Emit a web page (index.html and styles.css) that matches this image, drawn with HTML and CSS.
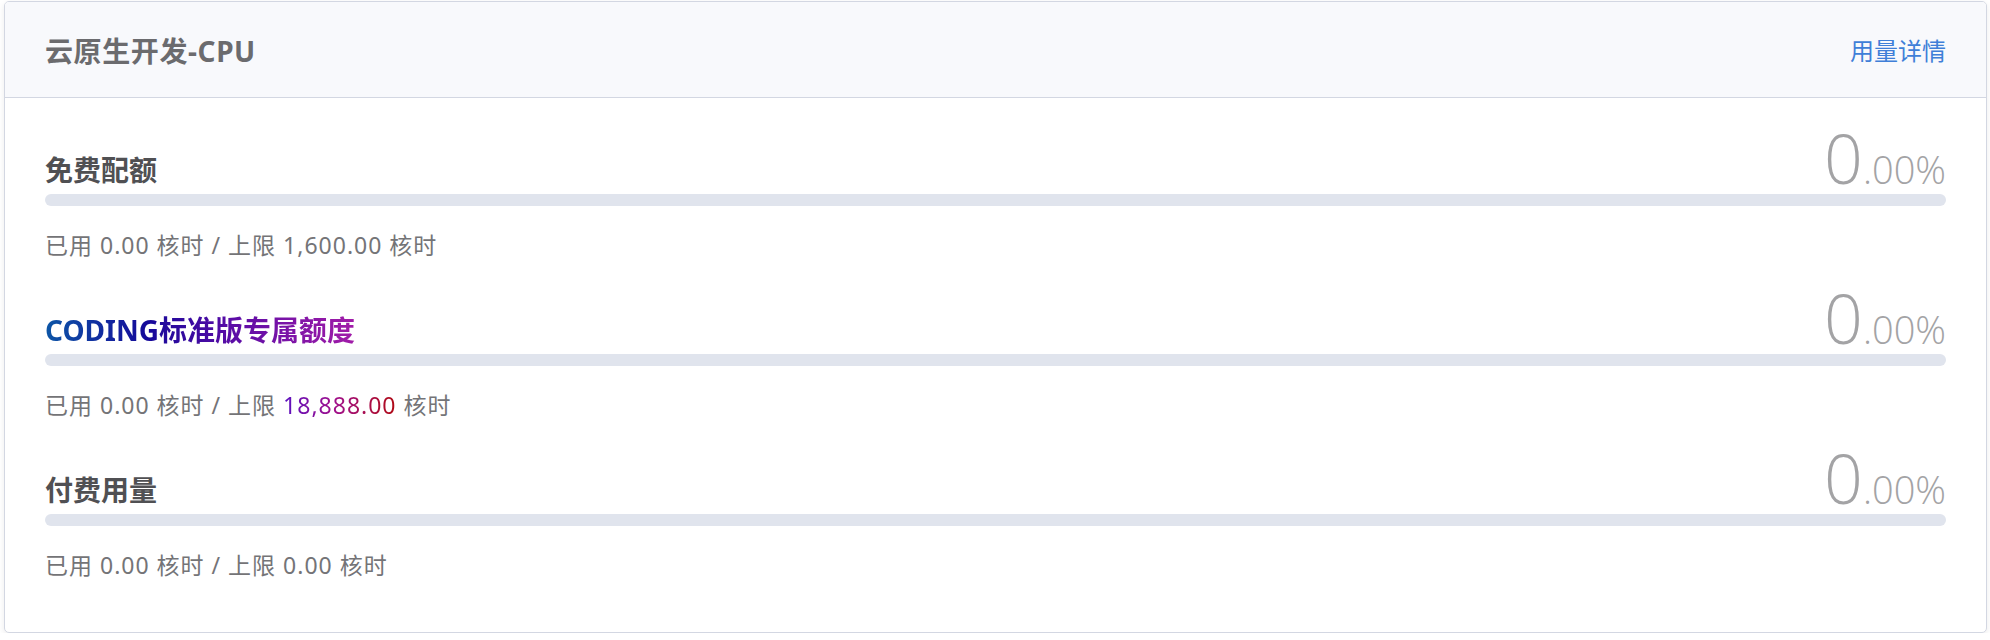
FILE: index.html
```html
<!DOCTYPE html>
<html lang="zh-CN">
<head>
<meta charset="utf-8">
<title>云原生开发-CPU</title>
<link rel="stylesheet" href="styles.css">
</head>
<body>
<div class="page">
  <div class="card">
    <div class="card-header">
      <div class="card-title">云原生开发-CPU</div>
      <a class="detail-link" href="#">用量详情</a>
    </div>
    <div class="card-body">
      <div class="section">
        <div class="row">
          <div class="label">免费配额</div>
          <div class="percent"><span class="int">0</span><span class="dec">.00%</span></div>
        </div>
        <div class="bar"><div class="bar-fill" style="width:0%"></div></div>
        <div class="usage">已用 0.00 核时 / 上限 1,600.00 核时</div>
      </div>
      <div class="section">
        <div class="row">
          <div class="label label-gradient">CODING标准版专属额度</div>
          <div class="percent"><span class="int">0</span><span class="dec">.00%</span></div>
        </div>
        <div class="bar"><div class="bar-fill" style="width:0%"></div></div>
        <div class="usage">已用 0.00 核时 / 上限 <span class="num-gradient">18,888.00</span> 核时</div>
      </div>
      <div class="section">
        <div class="row">
          <div class="label">付费用量</div>
          <div class="percent"><span class="int">0</span><span class="dec">.00%</span></div>
        </div>
        <div class="bar"><div class="bar-fill" style="width:0%"></div></div>
        <div class="usage">已用 0.00 核时 / 上限 0.00 核时</div>
      </div>
    </div>
  </div>
</div>
</body>
</html>
```

FILE: styles.css
```css
html, body {
  margin: 0;
  padding: 0;
  background: #ffffff;
}

body {
  font-family: "Noto Sans", "Noto Sans CJK SC", sans-serif;
}

.page {
  padding: 1px 3px 0 4px;
}

.card {
  border: 1px solid #d3d7e2;
  border-radius: 5px;
  background: #ffffff;
  box-shadow: 0 2px 6px rgba(0, 0, 0, 0.08);
  overflow: hidden;
}

.card-header {
  height: 95px;
  background: #f8f9fc;
  border-bottom: 1px solid #d3d7e2;
  padding: 0 40px;
  display: flex;
  align-items: center;
  justify-content: space-between;
}

.card-title {
  font-size: 28px;
  font-weight: 700;
  letter-spacing: 0.6px;
  color: #6b6b6e;
}

.detail-link {
  font-size: 24px;
  color: #3f7fd8;
  text-decoration: none;
}

.card-body {
  padding: 26px 40px 52px;
  display: flex;
  flex-direction: column;
  gap: 24px;
}

.section {
  display: flex;
  flex-direction: column;
}

.row {
  display: flex;
  justify-content: space-between;
  align-items: flex-end;
  height: 68px;
}

.label {
  font-size: 28px;
  font-weight: 700;
  color: #505053;
  line-height: 36px;
  padding-bottom: 4px;
}

.label-gradient {
  background: linear-gradient(90deg, #0c56a6 0%, #15099a 33%, #5a0ca6 60%, #a21ca8 100%);
  -webkit-background-clip: text;
  background-clip: text;
  color: transparent;
}

.percent {
  font-family: "Open Sans", "Noto Sans", sans-serif;
  font-weight: 300;
  font-size: 68px;
  color: #a3a3a5;
  line-height: 68px;
  white-space: nowrap;
}

.percent .int {
  font-size: 68px;
}

.percent .dec {
  font-size: 38px;
  line-height: 38px;
}

.bar {
  margin-top: 2px;
  height: 12px;
  border-radius: 6px;
  background: #e0e4ed;
  overflow: hidden;
}

.bar-fill {
  height: 100%;
  background: #3f7fd8;
}

.usage {
  margin-top: 24px;
  font-size: 23px;
  letter-spacing: 1px;
  line-height: 30px;
  color: #747477;
}

.num-gradient {
  background: linear-gradient(90deg, #5a10c0 0%, #a0108c 45%, #b00a12 100%);
  -webkit-background-clip: text;
  background-clip: text;
  color: transparent;
}
```
